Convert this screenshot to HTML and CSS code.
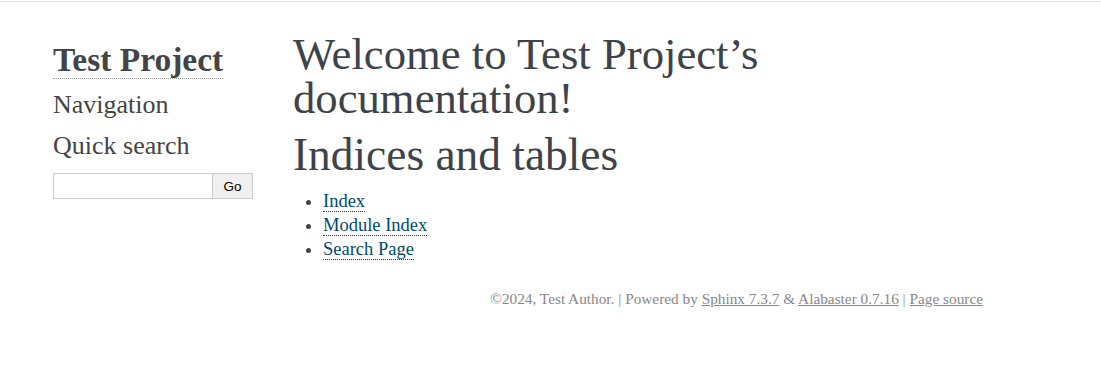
FILE: index.html
```html
<!DOCTYPE html>
<html lang="en">
<head>
<meta charset="utf-8">
<title>Welcome to Test Project’s documentation!</title>
<link rel="stylesheet" href="styles.css">
</head>
<body>
<div class="topline"></div>
<div class="document">
  <div class="sphinxsidebar">
    <h1 class="logo"><a href="#">Test Project</a></h1>
    <h3 class="nav">Navigation</h3>
    <h3 class="search-title">Quick search</h3>
    <form class="searchbox">
      <input type="text" class="search-input" aria-label="search">
      <button type="button" class="search-go">Go</button>
    </form>
  </div>
  <div class="body">
    <h1 class="title">Welcome to Test Project’s documentation!</h1>
    <h2 class="subtitle">Indices and tables</h2>
    <ul class="indices">
      <li><a href="#">Index</a></li>
      <li><a href="#">Module Index</a></li>
      <li><a href="#">Search Page</a></li>
    </ul>
  </div>
</div>
<div class="footer">
  ©2024, Test Author. | Powered by <a href="#">Sphinx 7.3.7</a> &amp; <a href="#">Alabaster 0.7.16</a> | <a href="#">Page source</a>
</div>
</body>
</html>
```

FILE: styles.css
```css
html, body {
  margin: 0;
  padding: 0;
  background: #fff;
}
body {
  font-family: "Liberation Serif", "Times New Roman", serif;
  font-size: 18.5px;
  color: #3E4349;
}
.topline {
  margin-top: 1px;
  height: 1px;
  background: #e3e3e3;
}
.document {
  display: flex;
  width: 940px;
  margin-left: 43px;
}
.sphinxsidebar {
  width: 200px;
  padding: 0 10px;
  display: flex;
  flex-direction: column;
}
.logo {
  margin: 38px 0 0 0;
  font-size: 33.5px;
  line-height: 40px;
  font-weight: bold;
}
.logo a {
  color: #444;
  text-decoration: none;
  border-bottom: 1px dotted #999;
}
.nav, .search-title {
  margin: 0;
  font-size: 26px;
  line-height: 32px;
  font-weight: normal;
  color: #444;
}
.nav {
  margin-top: 9px;
}
.search-title {
  margin-top: 9px;
}
.searchbox {
  display: flex;
  margin-top: 11px;
}
.search-input {
  box-sizing: border-box;
  width: 160px;
  height: 26px;
  border: 1px solid #ccc;
  margin: 0;
  padding: 0 4px;
  font-family: "Liberation Serif", serif;
  font-size: 17px;
  outline: none;
}
.search-go {
  box-sizing: border-box;
  width: 40px;
  height: 26px;
  border: 1px solid #ccc;
  border-left: none;
  background: #f0f0f0;
  margin: 0;
  padding: 0;
  font-family: "Liberation Sans", Arial, sans-serif;
  font-size: 13.5px;
  color: #000;
}
.body {
  width: 660px;
  padding: 0 30px;
}
.title {
  margin: 30px 0 0 0;
  font-size: 44.7px;
  line-height: 44px;
  font-weight: normal;
}
.subtitle {
  margin: 13px 0 0 0;
  font-size: 45.4px;
  line-height: 44px;
  font-weight: normal;
}
.indices {
  margin: 12px 0 0 0;
  padding-left: 30px;
  line-height: 24px;
}
.indices a {
  color: #004B6B;
  text-decoration: none;
  border-bottom: 1px dotted #004B6B;
}
.footer {
  width: 940px;
  margin: 28px 0 0 43px;
  text-align: right;
  font-size: 15.3px;
  line-height: 20px;
  color: #888;
}
.footer a {
  color: #888;
}
```
